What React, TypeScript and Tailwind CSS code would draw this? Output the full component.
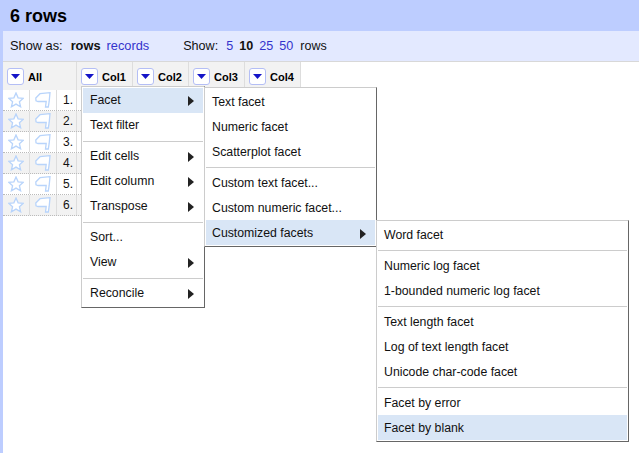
const rows = [1, 2, 3, 4, 5, 6];
const cols = ['Col1', 'Col2', 'Col3', 'Col4'];

type Item = { label?: string; sub?: boolean; active?: boolean };

const facetMenu: Item[] = [
  { label: 'Facet', sub: true, active: true },
  { label: 'Text filter' },
  {},
  { label: 'Edit cells', sub: true },
  { label: 'Edit column', sub: true },
  { label: 'Transpose', sub: true },
  {},
  { label: 'Sort...' },
  { label: 'View', sub: true },
  {},
  { label: 'Reconcile', sub: true },
];

const facetSubMenu: Item[] = [
  { label: 'Text facet' },
  { label: 'Numeric facet' },
  { label: 'Scatterplot facet' },
  {},
  { label: 'Custom text facet...' },
  { label: 'Custom numeric facet...' },
  { label: 'Customized facets', sub: true, active: true },
];

const customMenu: Item[] = [
  { label: 'Word facet' },
  {},
  { label: 'Numeric log facet' },
  { label: '1-bounded numeric log facet' },
  {},
  { label: 'Text length facet' },
  { label: 'Log of text length facet' },
  { label: 'Unicode char-code facet' },
  {},
  { label: 'Facet by error' },
  { label: 'Facet by blank', active: true },
];

function DropButton() {
  return (
    <span className="flex h-[17px] w-[17px] shrink-0 items-center justify-center rounded-[3px] border border-[#b4bef5] bg-white">
      <svg width="9" height="5" viewBox="0 0 9 5">
        <path d="M0 0h9L4.500 5z" fill="#1414c8" />
      </svg>
    </span>
  );
}

function Star() {
  return (
    <svg width="16" height="16" viewBox="0 0 16 16">
      <path
        d="M8 1l2.100 4.800 5.200.5-3.900 3.400 1.200 5.100L8 12.100l-4.600 2.700 1.200-5.100L.7 6.300l5.200-.5z"
        fill="#fff"
        stroke="#b8d4fb"
        strokeWidth="1.300"
      />
    </svg>
  );
}

function Flag() {
  return (
    <svg width="16" height="16" viewBox="0 0 16 16">
      <path
        d="M.8 6L5 1.700l10-1-.8 8.500-.9 5.800h-2.800l.7-5.500H3L1 8.800z"
        fill="#fff"
        stroke="#b8d4fb"
        strokeWidth="1.300"
      />
    </svg>
  );
}

function Menu({ items, className, textClass = '' }: { items: Item[]; className: string; textClass?: string }) {
  return (
    <div className={`absolute border border-[#cccccc] border-r-[#666666] border-b-[#666666] bg-white p-px ${className}`}>
      {items.map((item, i) =>
        item.label ? (
          <div
            key={i}
            className={`flex h-[25px] items-center justify-between pr-[9px] ${textClass || 'pl-[7px]'} ${item.active ? 'bg-[#d9e6f6]' : ''}`}
          >
            <span>{item.label}</span>
            {item.sub && (
              <svg width="6" height="10" viewBox="0 0 6 10">
                <path d="M0 0l6 5-6 5z" fill="#222222" />
              </svg>
            )}
          </div>
        ) : (
          <div key={i} className="flex h-[6px] items-center">
            <div className="h-px w-full bg-[#cccccc]" />
          </div>
        ),
      )}
    </div>
  );
}

export default function App() {
  return (
    <div className="relative flex h-[453px] w-[639px] flex-col overflow-hidden bg-white font-['Liberation_Sans',Arial,sans-serif] text-[12.300px] text-[#111111]">
      <div className="flex h-[31px] shrink-0 items-center bg-[#bdcdff] pl-[10px] text-[18px] font-bold leading-none text-black">
        6 rows
      </div>
      <div className="flex-1 border-l-[3px] border-[#bdcdff]">
        <div className="flex h-[30px] items-center bg-[#e3e9ff] pl-[7px] text-[12.800px]">
          <span>Show as:</span>
          <b className="ml-[8px]">rows</b>
          <span className="ml-[6px] text-[#3333cc]">records</span>
          <span className="ml-[34px] text-[12.600px]">Show:</span>
          <span className="ml-[8px] text-[12.600px] text-[#3333cc]">5</span>
          <b className="ml-[6px] text-[12.600px]">10</b>
          <span className="ml-[6px] text-[12.600px] text-[#3333cc]">25</span>
          <span className="ml-[6px] text-[12.600px] text-[#3333cc]">50</span>
          <span className="ml-[7px] text-[12.500px]">rows</span>
        </div>
        <div className="h-px bg-[#d8d8d8]" />
        <div className="flex h-[28px] w-[298px] items-center bg-[#f2f2f2] text-[11px] font-bold text-black">
          <div className="flex h-full w-[74px] items-center gap-[4px] border-r border-[#dddddd] pl-[4px]">
            <DropButton />
            <span className="pt-[2px]">All</span>
          </div>
          {cols.map((col) => (
            <div key={col} className="flex h-full w-[56px] items-center gap-[4px] border-r border-[#dddddd] pl-[4px]">
              <DropButton />
              <span className="pt-[2px]">{col}</span>
            </div>
          ))}
        </div>
        <div className="w-[298px]">
          {rows.map((n) => (
            <div
              key={n}
              className={`flex h-[21px] items-center border-b border-dotted border-[#bbbbbb] text-[12px] ${n % 2 === 0 ? 'bg-[#f2f2f2]' : 'bg-white'}`}
            >
              <div className="flex h-full w-[27px] items-center justify-center border-r border-[#dddddd]">
                <Star />
              </div>
              <div className="flex h-full w-[27px] items-center justify-center border-r border-[#dddddd]">
                <Flag />
              </div>
              <div className="flex h-full w-[20px] items-center border-r border-[#dddddd] pl-[6px]">{n}.</div>
            </div>
          ))}
        </div>
      </div>

      <Menu items={facetMenu} className="left-[81px] top-[86px] w-[124px]" />
      <Menu items={facetSubMenu} className="left-[204px] top-[87px] w-[173px]" textClass="pl-[6px] pt-[2px]" />
      <Menu items={customMenu} className="left-[376px] top-[220px] w-[253px]" textClass="pl-[6px] pt-[2px]" />
    </div>
  );
}
